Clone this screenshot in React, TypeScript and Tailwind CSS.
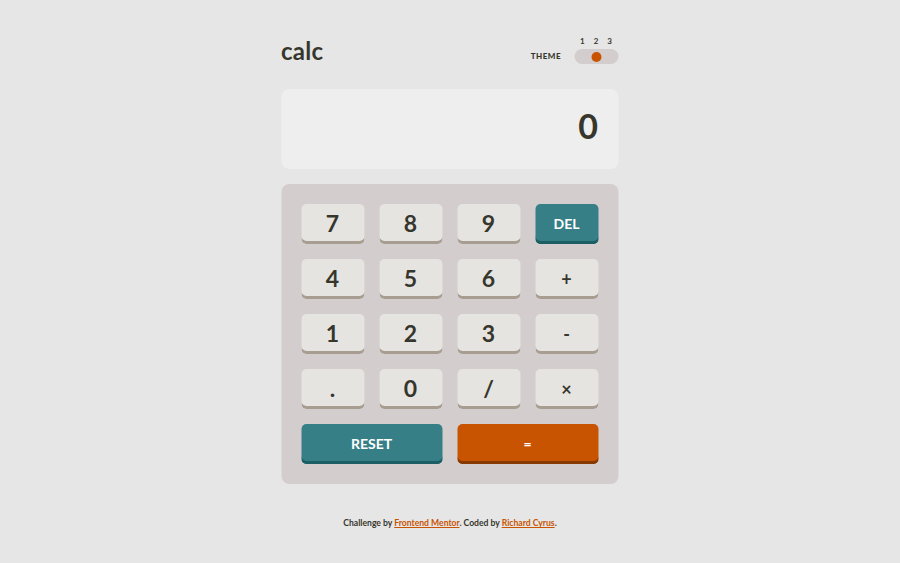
const keys: { label: string; kind: 'num' | 'del' | 'reset' | 'eq'; wide?: boolean }[] = [
  { label: '7', kind: 'num' },
  { label: '8', kind: 'num' },
  { label: '9', kind: 'num' },
  { label: 'DEL', kind: 'del' },
  { label: '4', kind: 'num' },
  { label: '5', kind: 'num' },
  { label: '6', kind: 'num' },
  { label: '+', kind: 'num' },
  { label: '1', kind: 'num' },
  { label: '2', kind: 'num' },
  { label: '3', kind: 'num' },
  { label: '-', kind: 'num' },
  { label: '.', kind: 'num' },
  { label: '0', kind: 'num' },
  { label: '/', kind: 'num' },
  { label: '×', kind: 'num' },
  { label: 'RESET', kind: 'reset', wide: true },
  { label: '=', kind: 'eq', wide: true },
]

function Key({ label, kind, wide }: { label: string; kind: string; wide?: boolean }) {
  let cls = 'bg-[#e5e4e1] shadow-[inset_0_-3px_0_#a79e91] text-[#36362c] text-[23px]'
  if (kind === 'del' || kind === 'reset') cls = 'bg-[#377f86] shadow-[inset_0_-3px_0_#1b5f65] text-white text-[14px]'
  if (kind === 'eq') cls = 'bg-[#c85402] shadow-[inset_0_-3px_0_#873901] text-white text-[14px]'
  if (label === '+' || label === '-' || label === '×') cls += ' !text-[18px]'
  return (
    <button
      type="button"
      className={`${wide ? 'col-span-2' : ''} h-[40px] rounded-[5px] pt-[1px] pb-[2px] font-bold flex items-center justify-center leading-none ${cls}`}
    >
      {label}
    </button>
  )
}

export default function App() {
  return (
    <div
      className="min-h-screen w-full bg-[#e6e6e6] flex flex-col items-center text-[#36362c]"
      style={{ fontFamily: 'Lato, "Noto Sans", sans-serif' }}
    >
      <div className="w-[337px] mt-[36px] -translate-x-[0.5px]">
        <header className="flex items-end justify-between h-[28px]">
          <h1 className="text-[24px] font-bold leading-none pb-[1px] tracking-[0.3px]">calc</h1>
          <div className="flex items-end gap-[13px]">
            <span className="text-[8px] font-black tracking-[0.5px] mb-[2px]">THEME</span>
            <div className="flex flex-col items-center">
              <div className="flex w-[44px] justify-between px-[6px] text-[8px] font-bold leading-none mb-[4px]">
                <span>1</span>
                <span>2</span>
                <span>3</span>
              </div>
              <div className="w-[44px] h-[15px] rounded-full bg-[#d3cdcd] flex items-center justify-center">
                <div className="w-[10px] h-[10px] rounded-full bg-[#c85402]" />
              </div>
            </div>
          </div>
        </header>

        <div className="mt-[25px] h-[80px] rounded-[8px] bg-[#eeeeee] flex items-center justify-end pr-[20px] pb-[6px]">
          <span className="text-[34px] font-bold leading-none">0</span>
        </div>

        <div className="mt-[15px] rounded-[8px] bg-[#d3cdcd] p-[20px] grid grid-cols-4 gap-x-[15px] gap-y-[15px]">
          {keys.map((k) => (
            <Key key={k.label} {...k} />
          ))}
        </div>
      </div>

      <footer className="mt-[33px] text-[8.6px] font-bold">
        Challenge by{' '}
        <a href="#" className="text-[#c85402] underline">
          Frontend Mentor
        </a>
        . Coded by{' '}
        <a href="#" className="text-[#c85402] underline">
          Richard Cyrus
        </a>
        .
      </footer>
    </div>
  )
}
